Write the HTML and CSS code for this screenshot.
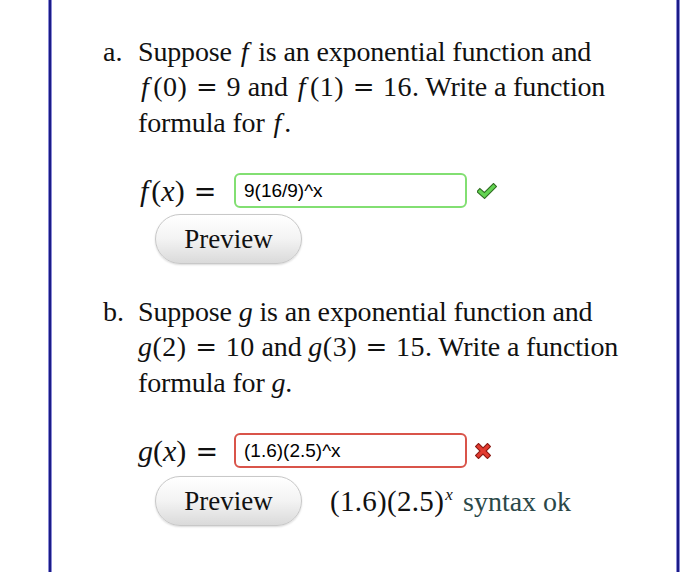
FILE: index.html
```html
<!DOCTYPE html>
<html>
<head>
<meta charset="utf-8">
<link rel="stylesheet" href="styles.css">
</head>
<body>
<div class="page">
  <div class="part part-a">
    <div class="marker">a.</div>
    <div class="body">
      <p class="prompt">
        <span class="line">Suppose <i class="mv f">f</i> is an exponential function and</span>
        <span class="line"><span class="m"><i class="mv f">f</i>(0)<span class="eq">=</span>9</span> and <span class="m"><i class="mv f">f</i>(1)<span class="eq">=</span>16</span>. Write a function</span>
        <span class="line">formula for <i class="mv f">f</i>.</span>
      </p>
      <div class="answer-row">
        <span class="lhs"><i class="mv f">f</i>(<i class="mv">x</i>)<span class="eq">=</span></span>
        <div class="answer ok">9(16/9)^x</div>
        <svg class="mark check" width="20" height="16" viewBox="0 0 20 16">
          <path d="M3 8.5 L7.5 12.5 L16.5 3.5" fill="none" stroke="#2f6b22" stroke-width="5.4" stroke-linejoin="miter" stroke-linecap="square"/>
          <path d="M3 8.5 L7.5 12.5 L16.5 3.5" fill="none" stroke="#63d452" stroke-width="3.2" stroke-linejoin="miter" stroke-linecap="square"/>
        </svg>
      </div>
      <div class="preview-row">
        <button class="preview">Preview</button>
      </div>
    </div>
  </div>
  <div class="part part-b">
    <div class="marker">b.</div>
    <div class="body">
      <p class="prompt">
        <span class="line">Suppose <i class="mv">g</i> is an exponential function and</span>
        <span class="line"><span class="m"><i class="mv">g</i>(2)<span class="eq">=</span>10</span> and <span class="m"><i class="mv">g</i>(3)<span class="eq">=</span>15</span>. Write a function</span>
        <span class="line">formula for <i class="mv">g</i>.</span>
      </p>
      <div class="answer-row">
        <span class="lhs"><i class="mv">g</i>(<i class="mv">x</i>)<span class="eq">=</span></span>
        <div class="answer bad">(1.6)(2.5)^x</div>
        <svg class="mark cross" width="16" height="16" viewBox="0 0 16 16">
          <path d="M3.5 3.5 L12.5 12.5 M12.5 3.5 L3.5 12.5" fill="none" stroke="#8a1a14" stroke-width="5.4" stroke-linecap="square"/>
          <path d="M3.5 3.5 L12.5 12.5 M12.5 3.5 L3.5 12.5" fill="none" stroke="#e23b30" stroke-width="3.2" stroke-linecap="square"/>
        </svg>
      </div>
      <div class="preview-row">
        <button class="preview">Preview</button>
        <span class="result"><span class="rm">(1.6)(2.5)<sup class="mv">x</sup></span><span class="ok-text">syntax ok</span></span>
      </div>
    </div>
  </div>
</div>
</body>
</html>
```

FILE: styles.css
```css
html, body {
  margin: 0;
  padding: 0;
  background: #fff;
}
body {
  width: 700px;
  height: 572px;
  overflow: hidden;
  font-family: "Liberation Serif", "Times New Roman", serif;
  color: #111;
}
.page {
  box-sizing: border-box;
  margin-left: 49px;
  width: 630px;
  height: 572px;
  border-left: 2px solid #1c1c86;
  border-right: 2px solid #1c1c86;
  box-shadow: -1px 0 0 #8a8ad6, 1px 0 0 #8a8ad6 inset, 1px 0 0 #8a8ad6, -1px 0 0 #8a8ad6 inset;
  padding: 34px 0 0 52px;
}
.part {
  display: flex;
}
.part-b {
  margin-top: 30px;
}
.marker {
  width: 35px;
  font-size: 28px;
  line-height: 35px;
}
.body {
  flex: 1;
}
.prompt {
  margin: 0;
  font-size: 28px;
  line-height: 35px;
  letter-spacing: -0.15px;
}
.line {
  display: block;
  white-space: nowrap;
}
.mv {
  font-style: italic;
}
.f {
  padding: 0 3px 0 2px;
}
.m .f {
  padding: 0 4px 0 3px;
}
.m {
  letter-spacing: 0.5px;
}
.eq {
  display: inline-block;
  width: 23px;
  margin: 0 8px;
  text-align: center;
  letter-spacing: 0;
  font-family: "DejaVu Serif", "Liberation Serif", serif;
  font-size: 26px;
}
.answer-row {
  display: flex;
  align-items: center;
  margin-top: 33px;
  height: 35px;
}
.lhs {
  font-size: 30px;
  line-height: 35px;
  width: 96px;
  white-space: nowrap;
}
.lhs .eq {
  font-size: 27px;
  margin-left: 9px;
}
.answer {
  box-sizing: border-box;
  width: 233px;
  height: 35px;
  border: 2px solid;
  border-radius: 6px;
  font-family: "Liberation Sans", Arial, sans-serif;
  font-size: 19px;
  line-height: 31px;
  padding-left: 8px;
  color: #000;
  background: #fff;
}
.answer.ok {
  border-color: #82df72;
}
.answer.bad {
  border-color: #d9544a;
}
.mark.check {
  margin-left: 10px;
}
.mark.cross {
  margin-left: 8px;
}
.preview-row {
  display: flex;
  align-items: center;
  margin-top: 6px;
  padding-left: 17px;
}
.part-b .preview-row {
  margin-top: 8px;
}
.preview {
  box-sizing: border-box;
  width: 147px;
  height: 50px;
  border: 1px solid #c8c8c8;
  border-radius: 25px;
  background: linear-gradient(#ffffff 0%, #f3f3f3 50%, #dadada 100%);
  box-shadow: 0 1px 2px rgba(0,0,0,0.15);
  font-family: "Liberation Serif", "Times New Roman", serif;
  font-size: 27px;
  color: #111;
  padding: 0;
}
.result {
  margin-left: 28px;
  font-size: 28px;
  white-space: nowrap;
}
.rm {
  font-size: 29px;
  letter-spacing: 0.3px;
}
.result sup {
  font-size: 17px;
  vertical-align: 11px;
  line-height: 0;
  margin-left: 1px;
}
.ok-text {
  color: #2b4848;
  margin-left: 10px;
}
```
